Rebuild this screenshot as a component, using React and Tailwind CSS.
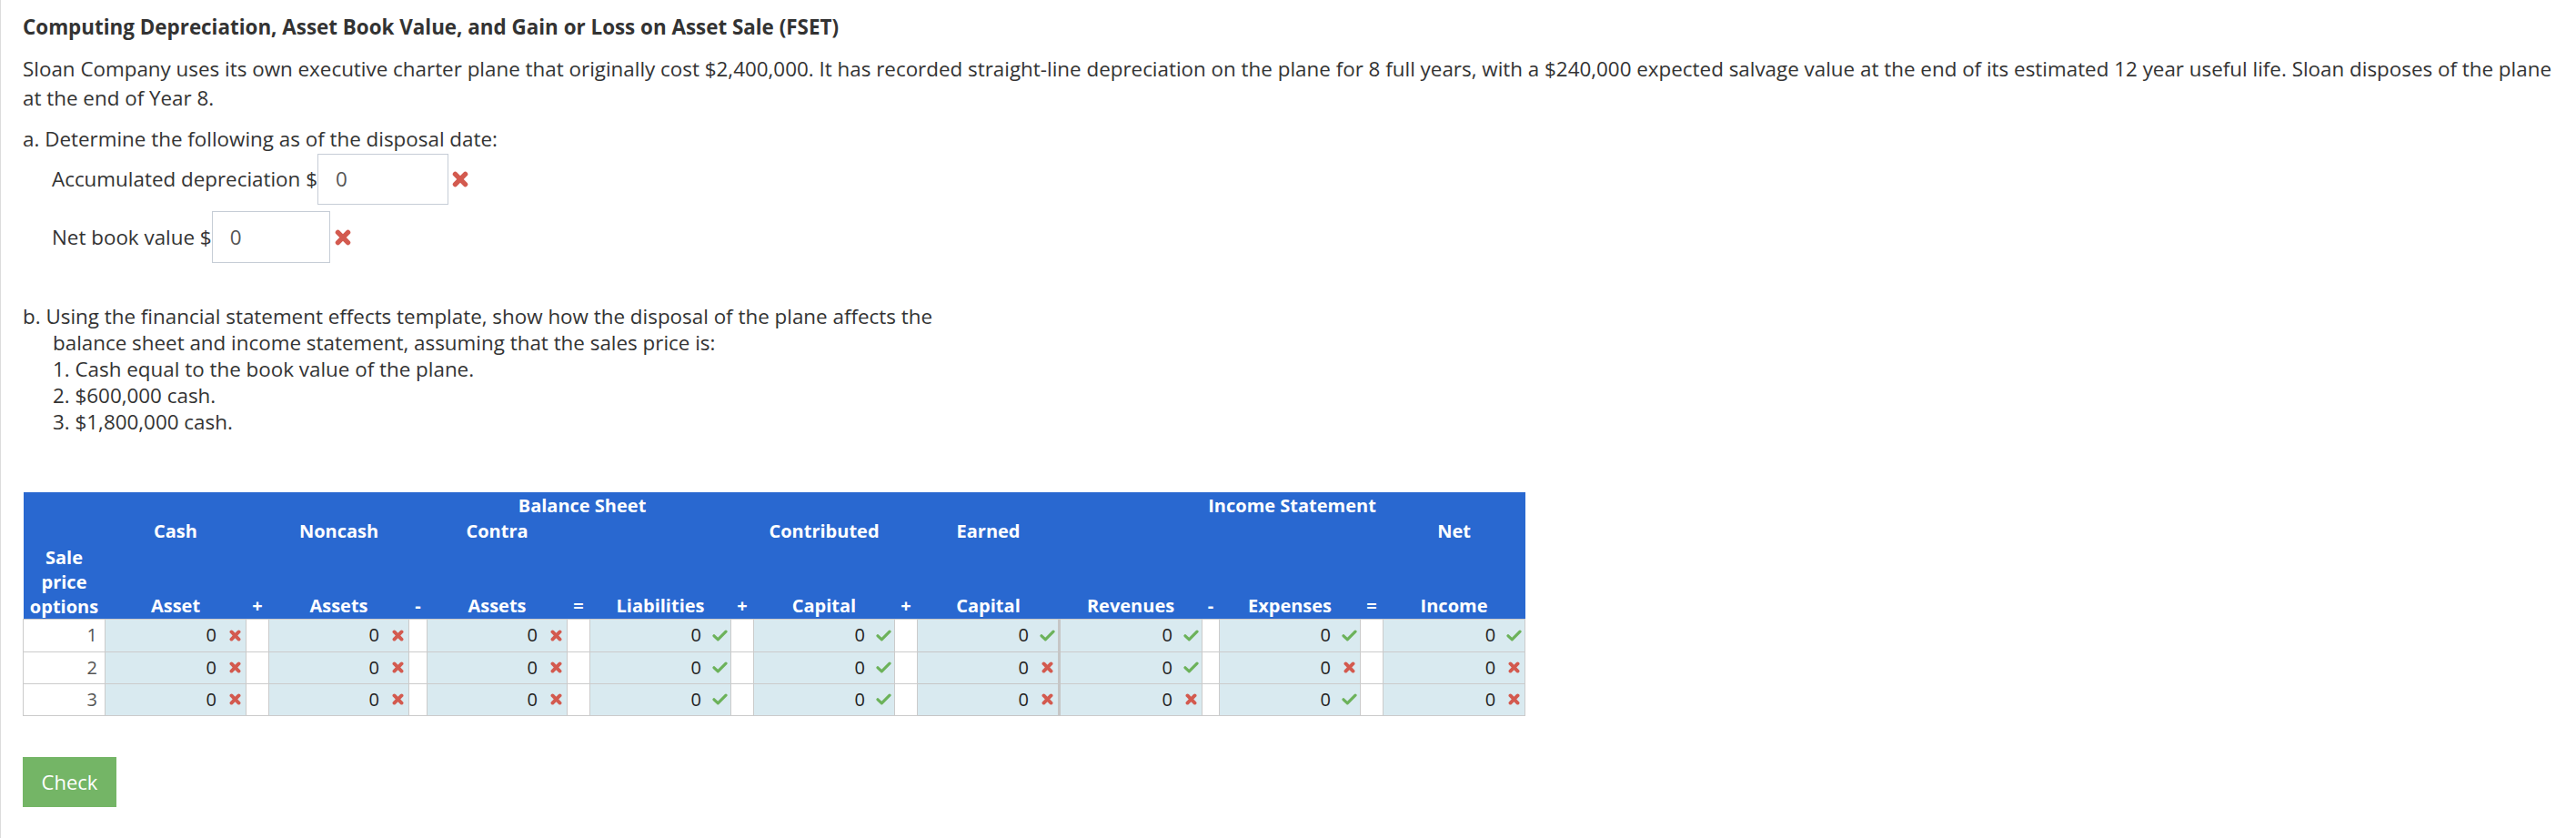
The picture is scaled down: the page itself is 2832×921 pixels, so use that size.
import React from "react";

const XMark = ({ size = 13 }) => (
  <svg width={size} height={size} viewBox="0 0 12 12" className="block">
    <path d="M2.3 2.3L9.7 9.7M9.7 2.3L2.3 9.7" stroke="#d35a4f" strokeWidth="3.6" strokeLinecap="round" />
  </svg>
);

const CheckMark = () => (
  <svg width="17" height="13" viewBox="0 0 17 13" className="block">
    <path d="M2 6.8L6.3 10.8L15 2.2" fill="none" stroke="#6cb25a" strokeWidth="3.2" strokeLinecap="round" strokeLinejoin="round" />
  </svg>
);

const rows = [
  ["x", "x", "x", "c", "c", "c", "c", "c", "c"],
  ["x", "x", "x", "c", "c", "x", "c", "x", "x"],
  ["x", "x", "x", "c", "c", "x", "x", "c", "x"],
];

const cols = [
  { w: "w-[90px]" },
  { w: "w-[155px]", v: 0 },
  { w: "w-[25px]" },
  { w: "w-[154px]", v: 1 },
  { w: "w-[20px]" },
  { w: "w-[154px]", v: 2 },
  { w: "w-[25px]" },
  { w: "w-[155px]", v: 3 },
  { w: "w-[25px]" },
  { w: "w-[155px]", v: 4 },
  { w: "w-[25px]" },
  { w: "w-[156px]", v: 5, thick: true },
  { w: "w-[157px]", v: 6 },
  { w: "w-[19px]" },
  { w: "w-[155px]", v: 7 },
  { w: "w-[25px]" },
  { w: "w-[156px]", v: 8 },
];

const row2 = ["", "Cash", "", "Noncash", "", "Contra", "", "", "", "Contributed", "", "Earned", "", "", "", "", "Net"];
const row3 = ["", "Asset", "+", "Assets", "-", "Assets", "=", "Liabilities", "+", "Capital", "+", "Capital", "Revenues", "-", "Expenses", "=", "Income"];

export default function App() {
  return (
    <div className="min-h-[921px] border-l border-[#dcdcdc] bg-white pl-6 font-['Open_Sans',sans-serif] text-[22.4px] text-[#333]">
      <h1 className="pt-[14px] text-[22.4px] font-bold leading-[32px] text-[#333]">
        Computing Depreciation, Asset Book Value, and Gain or Loss on Asset Sale (FSET)
      </h1>
      <p className="mt-[14px] leading-[32px]">
        <span className="whitespace-nowrap">
          Sloan Company uses its own executive charter plane that originally cost $2,400,000. It has recorded straight-line depreciation on the plane for 8 full years, with a $240,000 expected salvage value at the end of its estimated 12 year useful life. Sloan disposes of the plane
        </span>
        <br />
        at the end of Year 8.
      </p>
      <p className="mt-[13px] leading-[32px]">a. Determine the following as of the disposal date:</p>
      <div className="pl-8">
        <div className="flex h-[56px] items-center">
          <span className="leading-[32px]">Accumulated depreciation $</span>
          <div className="flex h-[56px] w-[144px] items-center border border-[#c6cdd6] bg-white pl-[19px] text-[#555]">0</div>
          <span className="ml-[4px]">
            <XMark size={18} />
          </span>
        </div>
        <div className="mt-[7px] flex h-[57px] items-center">
          <span className="leading-[32px]">Net book value $</span>
          <div className="flex h-[57px] w-[130px] items-center border border-[#c6cdd6] bg-white pl-[19px] text-[#555]">0</div>
          <span className="ml-[5px]">
            <XMark size={18} />
          </span>
        </div>
      </div>
      <div className="mt-[44px] leading-[29px]">
        <div>b. Using the financial statement effects template, show how the disposal of the plane affects the</div>
        <div className="pl-[33px]">
          <div>balance sheet and income statement, assuming that the sales price is:</div>
          <div>1. Cash equal to the book value of the plane.</div>
          <div>2. $600,000 cash.</div>
          <div>3. $1,800,000 cash.</div>
        </div>
      </div>

      <table className="mt-[63px] w-[1651px] table-fixed border-collapse text-[20px]">
        <colgroup>
          {cols.map((c, i) => (
            <col key={i} className={c.w} />
          ))}
        </colgroup>
        <thead className="bg-[#2968d0] font-bold text-white">
          <tr className="h-[29px]">
            <th className="p-0"></th>
            <th colSpan={11} className="p-0 text-center leading-[28px]">Balance Sheet</th>
            <th colSpan={5} className="p-0 text-center leading-[28px]">Income Statement</th>
          </tr>
          <tr className="h-[28px]">
            {row2.map((t, i) => (
              <th key={i} className="p-0 text-center leading-[28px]">{t}</th>
            ))}
          </tr>
          <tr className="h-[82px]">
            <th className="p-0 text-center align-bottom leading-[27px]">
              Sale
              <br />
              price
              <br />
              options
            </th>
            {row3.slice(1).map((t, i) => (
              <th key={i} className="p-0 pb-[1px] text-center align-bottom leading-[27px]">{t}</th>
            ))}
          </tr>
        </thead>
        <tbody>
          {rows.map((r, ri) => (
            <tr key={ri} className={ri === 0 ? "h-[36px]" : "h-[35px]"}>
              {cols.map((c, ci) => {
                if (ci === 0) {
                  return (
                    <td key={ci} className="border border-[#cbcbcb] bg-white p-0 pr-[8px] text-right text-[#555]">
                      {ri + 1}
                    </td>
                  );
                }
                if (c.v === undefined) {
                  return <td key={ci} className="border border-[#cbcbcb] bg-white p-0"></td>;
                }
                const st = r[c.v];
                return (
                  <td
                    key={ci}
                    className={
                      "border bg-[#d9eaf0] p-0 " +
                      (c.thick ? "border-r-[3px] border-[#c6c6c6]" : "border-[#cbcbcb]")
                    }
                  >
                    <div className="flex items-center justify-end text-[#222]">
                      <span>0</span>
                      <span className="ml-[8px] flex w-[24px] justify-center">
                        {st === "x" ? <XMark /> : <CheckMark />}
                      </span>
                    </div>
                  </td>
                );
              })}
            </tr>
          ))}
        </tbody>
      </table>

      <button className="mt-[45px] flex h-[55px] w-[103px] items-center justify-center bg-[#74b566] text-[22px] text-white">
        Check
      </button>
    </div>
  );
}
